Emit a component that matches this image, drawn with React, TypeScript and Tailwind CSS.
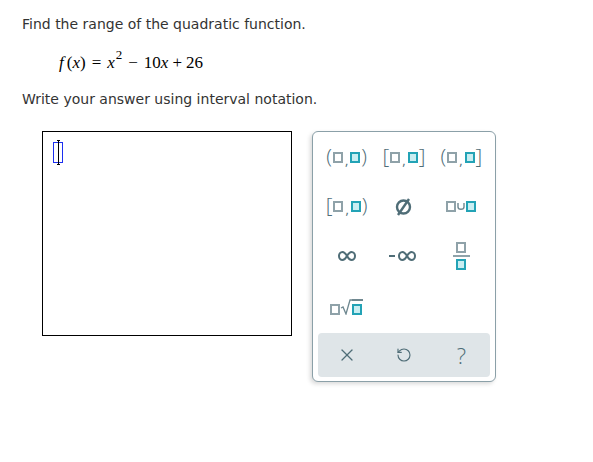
import { X, RotateCcw } from 'lucide-react';

const ink = 'text-[#4f6d77]';

function GrayBox() {
  return <span className="inline-block w-[10px] h-[11px] border-2 border-[#8fa2a9] bg-white" />;
}

function TealBox() {
  return <span className="inline-block w-[10px] h-[11px] border-2 border-[#23a3b6] bg-[#c9eef2]" />;
}

function Interval({ left, right }: { left: string; right: string }) {
  return (
    <span className={`flex items-center ${ink}`}>
      <span className="text-[21px] leading-none font-light font-['Open_Sans',sans-serif] -mt-[2px] mr-[1px]">{left}</span>
      <GrayBox />
      <span className="text-[13px] leading-none mx-[2px] mt-[6px] font-['Open_Sans',sans-serif]">,</span>
      <TealBox />
      <span className="text-[21px] leading-none font-light font-['Open_Sans',sans-serif] -mt-[2px] ml-[1px]">{right}</span>
    </span>
  );
}

function Infinity() {
  return (
    <svg width="18" height="10" viewBox="0 0 18 10" fill="none" stroke="#4f6d77" strokeWidth="2">
      <path d="M9 5 C7 1.5 5.5 1 4.5 1 C2.5 1 1 2.8 1 5 C1 7.2 2.5 9 4.5 9 C5.5 9 7 8.5 9 5 C11 1.5 12.5 1 13.5 1 C15.5 1 17 2.8 17 5 C17 7.2 15.5 9 13.5 9 C12.5 9 11 8.5 9 5 Z" />
    </svg>
  );
}

function Cell({ children }: { children: React.ReactNode }) {
  return <div className="flex items-center justify-center h-[49px]">{children}</div>;
}

export default function App() {
  return (
    <div className="w-[593px] h-[462px] bg-white pl-[22px] pt-[15px] font-['DejaVu_Sans',sans-serif] text-[#333]">
      <p className="text-[14px] leading-[18px]">Find the range of the quadratic function.</p>
      <p className="ml-[37px] mt-[20px] text-[17px] leading-[20px] text-black font-['Liberation_Serif',serif] flex items-baseline whitespace-pre">
        <i>f</i>
        <span className="ml-[3px]">(</span>
        <i>x</i>
        <span>)</span>
        <span className="mx-[6px]">=</span>
        <i>x</i>
        <span className="text-[13px] ml-[1px] relative -top-[9px]">2</span>
        <span className="mx-[6px]">−</span>
        <span>10</span>
        <i>x</i>
        <span className="mx-[4px]">+</span>
        <span>26</span>
      </p>
      <p className="mt-[16px] text-[14px] leading-[18px]">Write your answer using interval notation.</p>

      <div className="flex mt-[23px] ml-[20px] gap-[20px]">
        <div className="w-[250px] h-[205px] border border-black pl-[10px] pt-[10px]">
          <div className="relative w-[10px] h-[21px] border border-[#1c2ff0]">
            <span className="absolute left-[3px] -top-[3px] w-[3px] h-[1px] bg-black" />
            <span className="absolute left-[4px] -top-[2px] w-[1px] h-[23px] bg-black" />
            <span className="absolute left-[3px] -bottom-[3px] w-[3px] h-[1px] bg-black" />
          </div>
        </div>

        <div className="w-[184px] h-[251px] border border-[#8ba0a8] rounded-[6px] bg-white shadow-[-2px_2px_4px_rgba(0,0,0,0.15)] pt-[1px] px-[5px] flex flex-col">
          <div className="grid grid-cols-3">
            <Cell><Interval left="(" right=")" /></Cell>
            <Cell><Interval left="[" right="]" /></Cell>
            <Cell><Interval left="(" right="]" /></Cell>

            <Cell><Interval left="[" right=")" /></Cell>
            <Cell>
              <svg width="19" height="20" viewBox="0 0 19 20" fill="none" stroke="#4f6d77" strokeWidth="2.4">
                <circle cx="9.5" cy="10" r="6.5" />
                <path d="M4 18 L15 2" />
              </svg>
            </Cell>
            <Cell>
              <span className="flex items-center gap-[1px]">
                <GrayBox />
                <svg width="8" height="10" viewBox="0 0 8 10" fill="none" stroke="#6f8890" strokeWidth="1.4">
                  <path d="M1 1 V5 C1 8 7 8 7 5 V1" />
                </svg>
                <TealBox />
              </span>
            </Cell>

            <Cell><Infinity /></Cell>
            <Cell>
              <span className="flex items-center gap-[3px] mr-[2px]">
                <span className="w-[6px] h-[2px] bg-[#4f6d77]" />
                <Infinity />
              </span>
            </Cell>
            <Cell>
              <span className="flex flex-col items-center">
                <GrayBox />
                <span className="w-[17px] h-[2px] bg-[#8fa2a9] my-[2px]" />
                <TealBox />
              </span>
            </Cell>

            <Cell>
              <span className="flex items-end mt-[4px]">
                <GrayBox />
                <svg width="12" height="16" viewBox="0 0 12 16" fill="none" stroke="#6f8890" strokeWidth="1.3">
                  <path d="M1 9 L3 8 L6 15 L10 1 L12 1" />
                </svg>
                <span className="flex flex-col">
                  <span className="w-[11px] h-[1.3px] bg-[#6f8890] mb-[3px]" />
                  <TealBox />
                </span>
              </span>
            </Cell>
            <Cell>{null}</Cell>
            <Cell>{null}</Cell>
          </div>

          <div className="mt-[4px] h-[44px] rounded-[4px] bg-[#dfe5e8] grid grid-cols-3 items-center">
            <div className="flex justify-center">
              <X size={20} strokeWidth={1.5} color="#4f6d77" />
            </div>
            <div className="flex justify-center">
              <RotateCcw size={16} strokeWidth={1.7} color="#4f6d77" />
            </div>
            <div className={`flex justify-center text-[22px] leading-none font-light font-['Open_Sans',sans-serif] ${ink}`}>?</div>
          </div>
        </div>
      </div>
    </div>
  );
}
